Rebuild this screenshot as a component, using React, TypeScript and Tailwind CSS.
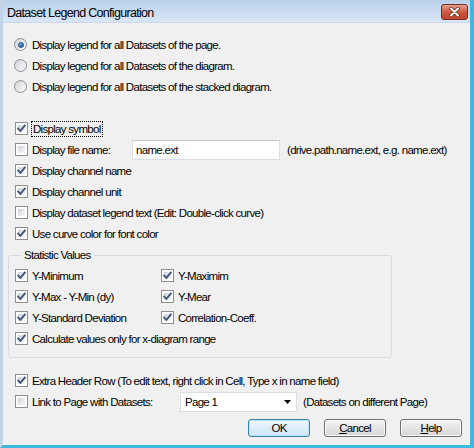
import React from "react";

function Check({ checked = false }: { checked?: boolean }) {
  return (
    <span className="relative flex h-[13px] w-[13px] shrink-0 items-center justify-center border border-[#8e8f8f] bg-white">
      <span className="absolute inset-[2px] bg-gradient-to-br from-[#cdd2d8] to-[#f7f8f9]" />
      {checked && (
        <svg className="relative" width="11" height="11" viewBox="0 0 11 11">
          <path d="M2.2 5.6 L4.4 7.9 L8.8 2.6" fill="none" stroke="#42547a" strokeWidth="1.9" strokeLinecap="square" />
        </svg>
      )}
    </span>
  );
}

function Radio({ selected = false }: { selected?: boolean }) {
  return (
    <span className="relative flex h-[13px] w-[13px] shrink-0 items-center justify-center rounded-full border border-[#8e8f8f] bg-gradient-to-br from-[#d2d5da] to-[#fbfbfb]">
      {selected && (
        <span className="h-[6px] w-[6px] rounded-full border border-[#1b4f8c] bg-gradient-to-br from-[#7fb2ea] to-[#1f5fae]" />
      )}
    </span>
  );
}

function RadioRow({ label, selected }: { label: string; selected?: boolean }) {
  return (
    <div className="flex h-[21px] items-center gap-[5px] pl-[11px]">
      <Radio selected={selected} />
      <span>{label}</span>
    </div>
  );
}

function CheckRow({ label, checked, focus }: { label: string; checked?: boolean; focus?: boolean }) {
  return (
    <div className="flex h-[21px] items-center gap-[4px] pl-[12px]">
      <Check checked={checked} />
      <span className={focus ? "px-[1px] outline outline-1 outline-dotted outline-black" : ""}>{label}</span>
    </div>
  );
}

function StatCheck({ label }: { label: string }) {
  return (
    <div className="flex h-[21px] items-center gap-[4px]">
      <Check checked />
      <span>{label}</span>
    </div>
  );
}

export default function App() {
  return (
    <div className="flex h-[448px] w-[474px] flex-col border-b-[3px] border-l-[3px] border-r-[4px] border-b-[#3cb9e3] border-l-[#c3d4e9] border-r-[#3cb9e3] bg-[#f0f0f0] font-['Liberation_Sans',Arial,sans-serif] text-[11.5px] leading-[14px] tracking-[-0.7px] text-black">
      {/* Title bar */}
      <div className="flex h-[23px] shrink-0 items-start justify-between border-b border-b-[#c9d8ea] bg-gradient-to-b from-[#b9cfea] to-[#d9e6f5] pl-[4px] pr-[2px]">
        <span className="pt-[5px] text-[12.5px] leading-[16px]">Dataset Legend Configuration</span>
        <span className="mt-[4px] flex h-[16px] w-[27px] items-center justify-center rounded-[3px] border border-[#7d2a20] bg-gradient-to-b from-[#e7a093] via-[#d0583f] to-[#c2442c]">
          <svg width="13" height="10" viewBox="0 0 13 10">
            <path d="M3 1.5 L10 8.5 M10 1.5 L3 8.5" stroke="#6b2418" strokeWidth="3.6" strokeLinecap="round" />
            <path d="M3 1.5 L10 8.5 M10 1.5 L3 8.5" stroke="#ffffff" strokeWidth="2" strokeLinecap="round" />
          </svg>
        </span>
      </div>

      {/* Body */}
      <div className="flex flex-1 flex-col border-r border-r-[#fbfbfb] pt-[11px]">
        <RadioRow selected label="Display legend for all Datasets of the page." />
        <RadioRow label="Display legend for all Datasets of the diagram." />
        <RadioRow label="Display legend for all Datasets of the stacked diagram." />

        <div className="mt-[21px] flex flex-col">
          <CheckRow checked focus label="Display symbol" />
          <div className="flex h-[21px] items-center pl-[12px]">
            <Check />
            <span className="ml-[4px] w-[100px]">Display file name:</span>
            <div className="flex h-[20px] w-[148px] items-center border border-[#dadee3] border-t-[#c6cbd2] bg-white pl-[3px]">
              name.ext
            </div>
            <span className="ml-[7px]">(drive.path.name.ext, e.g. name.ext)</span>
          </div>
          <CheckRow checked label="Display channel name" />
          <CheckRow checked label="Display channel unit" />
          <CheckRow label="Display dataset legend text (Edit: Double-click curve)" />
          <CheckRow checked label="Use curve color for font color" />
        </div>

        <fieldset className="ml-[5px] mt-[4px] w-[384px] rounded-[3px] border border-[#d5dbe0] pb-[8px] pl-[6px] pt-[3px]">
          <legend className="ml-[6px] px-[3px] leading-[14px]">Statistic Values</legend>
          <div className="grid grid-cols-[146px_1fr]">
            <StatCheck label="Y-Minimum" />
            <StatCheck label="Y-Maximim" />
            <StatCheck label="Y-Max - Y-Min (dy)" />
            <StatCheck label="Y-Mear" />
            <StatCheck label="Y-Standard Deviation" />
            <StatCheck label="Correlation-Coeff." />
            <div className="col-span-2">
              <StatCheck label="Calculate values only for x-diagram range" />
            </div>
          </div>
        </fieldset>

        <div className="mt-[12px] flex flex-col">
          <CheckRow checked label="Extra Header Row (To edit text, right click in Cell, Type x in name field)" />
          <div className="flex h-[21px] items-center pl-[12px]">
            <Check />
            <span className="ml-[4px] w-[148px]">Link to Page with Datasets:</span>
            <div className="flex h-[20px] w-[117px] items-center justify-between border border-[#dadee3] bg-white pl-[4px] pr-[5px]">
              <span>Page 1</span>
              <svg width="7" height="4" viewBox="0 0 7 4">
                <path d="M0 0 H7 L3.5 4 Z" fill="#000" />
              </svg>
            </div>
            <span className="ml-[6px]">(Datasets on different Page)</span>
          </div>
        </div>

        <div className="mt-[7px] flex justify-end gap-[14px] pr-[7px]">
          <button className="h-[18px] w-[62px] rounded-[3px] border border-[#3c7fb1] bg-gradient-to-b from-[#eef7fd] to-[#cde4f3] leading-[14px] shadow-[inset_0_0_0_1px_#bfe4f8]">
            OK
          </button>
          <button className="h-[18px] w-[62px] rounded-[3px] border border-[#707070] bg-gradient-to-b from-[#f3f3f3] to-[#d6d6d6] leading-[14px] shadow-[inset_0_0_0_1px_#fafafa]">
            <span className="underline">C</span>ancel
          </button>
          <button className="h-[18px] w-[62px] rounded-[3px] border border-[#707070] bg-gradient-to-b from-[#f3f3f3] to-[#d6d6d6] leading-[14px] shadow-[inset_0_0_0_1px_#fafafa]">
            <span className="underline">H</span>elp
          </button>
        </div>
      </div>
    </div>
  );
}
